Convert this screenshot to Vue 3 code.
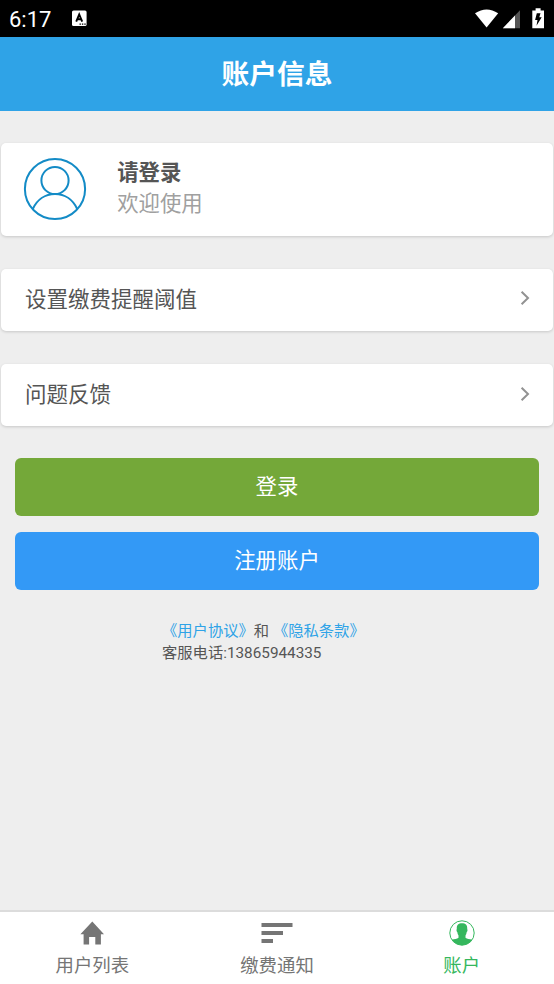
<script setup>
const rows = ['设置缴费提醒阈值', '问题反馈']
</script>

<template>
  <div class="screen">
    <div class="status">
      <span class="time">6:17</span>
      <svg class="ime" width="15" height="17" viewBox="0 0 15 17">
        <rect x="0" y="0.5" width="14.6" height="15.6" rx="1.6" fill="#fff" />
        <path d="M4.2 11.6 7.2 4.4 10.2 11.6M5.2 9.3H9.2" fill="none" stroke="#000" stroke-width="1.9" />
        <path d="M7.5 14.2H13.8" stroke="#000" stroke-width="1.3" stroke-dasharray="1.4 1" />
      </svg>
      <svg class="signals" width="70" height="22" viewBox="0 0 70 22">
        <path d="M0 5.2Q11.6 -2.4 23.2 5.2L11.6 19.5Z" fill="#fff" />
        <path d="M27.8 20.3 45 2.2V20.3Z" fill="#555" />
        <path d="M27.8 20.3 40 7.4V20.3Z" fill="#fff" />
        <path d="M57.3 2.6H60.6V0.3H65.6V2.6H69V20.3H57.3Z" fill="#fff" />
        <path d="M61.8 5.2H65.5L64.3 9.2H66.7L61.5 17.7 62.5 12H60.1Z" fill="#000" />
      </svg>
    </div>
    <header class="header">账户信息</header>

    <main class="content">
      <section class="card profile">
        <svg class="avatar" width="64" height="64" viewBox="0 0 64 64" fill="none" stroke="#138bc6" stroke-width="2">
          <circle cx="32" cy="32" r="30.1" />
          <circle cx="32" cy="23.5" r="13.6" />
          <path d="M9.8 52C14 43 22 37.1 32 37.1S50 43 54.2 52" />
        </svg>
        <div class="who">
          <div class="name">请登录</div>
          <div class="welcome">欢迎使用</div>
        </div>
      </section>
      <section v-for="row in rows" :key="row" class="card row">
        <span>{{ row }}</span>
        <svg width="10" height="16" viewBox="0 0 10 16" fill="none" stroke="#929292" stroke-width="2">
          <path d="M1.6 1.8 8 8 1.6 14.2" />
        </svg>
      </section>
      <button class="btn login">登录</button>
      <button class="btn register">注册账户</button>
      <div class="legal">
        <div><a>《用户协议》</a>和 <a>《隐私条款》</a></div>
        <div>客服电话:13865944335</div>
      </div>
    </main>

    <nav class="tabs">
      <div class="tab">
        <svg width="32" height="28" viewBox="0 0 32 28" fill="#757575">
          <path d="M16.3 2.6 28 15.2H24.9V25.6H19.3V18H13.1V25.6H7.6V15.2H4.4Z" />
        </svg>
        <span>用户列表</span>
      </div>
      <div class="tab">
        <svg width="32" height="28" viewBox="0 0 32 28" fill="#757575">
          <path d="M0.5 4H31.5V8H0.5ZM0.5 12.1H22V16.1H0.5ZM0.5 20H12V24H0.5Z" />
        </svg>
        <span>缴费通知</span>
      </div>
      <div class="tab active">
        <svg width="32" height="28" viewBox="0 0 32 28">
          <circle cx="16" cy="14" r="12.2" fill="none" stroke="#35b75d" stroke-width="1" />
          <path d="M16 4.2C20 4.2 21.5 6.2 21.2 10.2 21.8 10.4 21.5 12.6 20.7 13 20.4 14.8 20 15.8 19.5 16.4V18.7C21 20 23.5 20 26.2 20.8A12.2 12.2 0 0 1 5.8 20.8C8.5 20 11 20 12.5 18.7V16.4C12 15.8 11.6 14.8 11.3 13 10.5 12.6 10.2 10.4 10.8 10.2 10.5 6.2 12 4.2 16 4.2Z" fill="#35b75d" />
        </svg>
        <span>账户</span>
      </div>
    </nav>
  </div>
</template>

<style>
body {
  margin: 0;
}
</style>

<style scoped>
.screen {
  height: 984px;
  display: flex;
  flex-direction: column;
  background: #eee;
  color: #555;
  font-family: Roboto, "Noto Sans CJK SC", sans-serif;
  overflow: hidden;
}
.status {
  height: 37px;
  flex: none;
  display: flex;
  align-items: center;
  box-sizing: border-box;
  padding: 0 9px;
  background: #000;
  color: #fff;
}
.time {
  width: 63px;
  font-size: 22px;
  line-height: 37px;
  padding-top: 2px;
}
.signals {
  margin-left: auto;
}
.header {
  height: 74px;
  flex: none;
  background: #2fa3e7;
  color: #fff;
  text-align: center;
  font-size: 27.7px;
  line-height: 75px;
  font-weight: 700;
}
.content {
  flex: 1;
  padding-top: 32px;
}
.card {
  margin: 0 1.2px 32.5px;
  box-sizing: border-box;
  background: #fff;
  border-radius: 5px;
  box-shadow: 0 1px 3px rgba(0, 0, 0, 0.16);
}
.profile {
  height: 93px;
  display: flex;
  align-items: center;
  padding: 0 0 2px 22px;
}
.who {
  margin: -1px 0 0 30px;
  font-size: 21.4px;
  line-height: 31px;
}
.name {
  font-weight: 700;
}
.welcome {
  color: #a0a0a0;
}
.row {
  height: 62.7px;
  display: flex;
  align-items: center;
  justify-content: space-between;
  padding: 0 22.4px 3px 23.8px;
  font-size: 21.5px;
}
.row span {
  padding-bottom: 2px;
}
.btn {
  display: block;
  width: 524px;
  height: 58.5px;
  margin: 0 auto 15.5px;
  padding: 0 0 5px;
  border: 0;
  border-radius: 6px;
  color: #fff;
  font: 21.4px Roboto, "Noto Sans CJK SC", sans-serif;
}
.login {
  margin-top: -1px;
  background: #74a839;
}
.register {
  background: #3399f6;
}
.legal {
  margin: 31px 0 0 162px;
  font-size: 15.3px;
  line-height: 21.5px;
}
.legal a {
  color: #2fa3e7;
}
.tabs {
  height: 74px;
  flex: none;
  box-sizing: border-box;
  display: grid;
  grid-template-columns: repeat(3, 1fr);
  border-top: 2px solid #dcdcdc;
  background: #fff;
}
.tab {
  display: flex;
  flex-direction: column;
  align-items: center;
  padding-top: 7px;
  color: #757575;
  font-size: 18.4px;
  line-height: 38px;
}
.active {
  color: #35b75d;
}
</style>
